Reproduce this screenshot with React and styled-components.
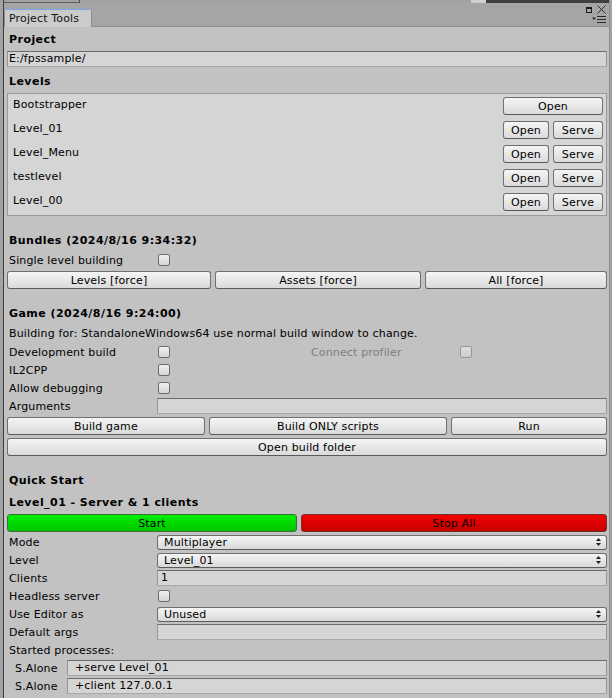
import React from "react";
import styled, { createGlobalStyle, css } from "styled-components";

const GlobalStyle = createGlobalStyle`
  html, body { margin: 0; padding: 0; background: #a3a3a3; }
  body {
    width: 612px; height: 698px; overflow: hidden;
    font-family: "DejaVu Sans", Verdana, sans-serif;
    font-size: 11px; color: #000;
    letter-spacing: 0.15px;
  }
  * { box-sizing: border-box; }
`;

const Window = styled.div`
  width: 612px;
  height: 698px;
  padding-left: 3px;
  background: #a3a3a3;
  overflow: hidden;
`;

const Frame = styled.div`
  width: 607px;
  height: 100%;
  border-left: 1px solid #3c3c3c;
  border-right: 1px solid #8d8d8d;
  display: flex;
  flex-direction: column;
`;

const TopStrip = styled.div`
  height: 3px;
  display: flex;
  flex: none;
`;

const StripSeg = styled.div`
  width: ${(p) => (p.$w ? `${p.$w}px` : "auto")};
  flex: ${(p) => (p.$w ? "none" : "1")};
  background: ${(p) => p.$bg};
  border-bottom: ${(p) => (p.$line ? "1px solid #5e5e5e" : "none")};
  border-right: ${(p) => (p.$edge ? "1px solid #4a4a4a" : "none")};
`;

const TabBar = styled.div`
  height: 24px;
  flex: none;
  background: #a5a5a5;
  display: flex;
  justify-content: space-between;
  align-items: flex-end;
  border-bottom: 1px solid #8f8f8f;
`;

const Tab = styled.div`
  width: 88px;
  height: 18px;
  margin-bottom: -1px;
  background: #cbcbcb;
  border: 1px solid #8f8f8f;
  border-top: 1px solid #79a6e6;
  border-bottom: none;
  padding: 1px 0 0 4px;
  line-height: 16px;
  color: #111;
`;

const IconCluster = styled.div`
  align-self: flex-start;
  margin-top: 2px;
  padding-right: 3px;
  display: flex;
  flex-direction: column;
  align-items: flex-end;
`;

const IconRow = styled.div`
  display: flex;
  align-items: center;
  gap: 5px;
  height: ${(p) => p.$h}px;
  margin-top: ${(p) => p.$mt || 0}px;
`;

const Panel = styled.div`
  flex: 1;
  background: #c2c2c2;
  padding: 3px 2px 0 3px;
  display: flex;
  flex-direction: column;
`;

const textNudge = css`
  height: 18px;
  padding-top: 1px;
  line-height: 18px;
  white-space: nowrap;
`;

const Header = styled.div`
  ${textNudge}
  font-weight: bold;
  letter-spacing: 0.45px;
  padding-left: 2px;
  margin-top: ${(p) => p.$mt || 0}px;
  flex: none;
`;

const Line = styled.div`
  ${textNudge}
  padding-left: 2px;
  margin-top: ${(p) => p.$mt || 0}px;
  flex: none;
`;

const fieldStyle = css`
  height: 16px;
  border: 1px solid #979797;
  border-top-color: #6c6c6c;
  border-bottom-color: #a8a8a8;
  background: #d5d5d5;
  line-height: 14px;
  white-space: nowrap;
  overflow: hidden;
`;

const TextField = styled.div`
  ${fieldStyle}
  padding-left: ${(p) => p.$pad ?? 1}px;
  margin-top: ${(p) => p.$mt || 0}px;
  flex: none;
`;

const LevelBox = styled.div`
  margin-top: ${(p) => p.$mt || 0}px;
  border: 1px solid #9a9a9a;
  background: #d5d5d5;
  padding: 1px 3px 0 5px;
  flex: none;
`;

const LevelRow = styled.div`
  height: 24px;
  display: flex;
  justify-content: space-between;
  align-items: flex-start;
`;

const LevelName = styled.div`
  ${textNudge}
`;

const ButtonGroup = styled.div`
  display: flex;
  gap: 4px;
  margin-top: 2px;
`;

const variants = {
  normal: css`
    background: linear-gradient(#f5f5f5, #dadada);
    border-color: #707070;
    border-bottom-color: #5a5a5a;
  `,
  green: css`
    background: linear-gradient(#00f000, #00c400);
    border-color: #3e6e3e;
  `,
  red: css`
    background: linear-gradient(#f40000, #c60000);
    border-color: #703030;
  `,
};

const Button = styled.button`
  width: ${(p) => p.$w}px;
  height: 18px;
  padding: 2px 0 0;
  border: 1px solid;
  border-radius: 3px;
  font-family: inherit;
  font-size: 11px;
  letter-spacing: 0.15px;
  line-height: 14px;
  color: #000;
  text-align: center;
  white-space: nowrap;
  flex: none;
  ${(p) => variants[p.$variant || "normal"]}
`;

const ButtonRow = styled.div`
  display: flex;
  gap: 4px;
  margin-top: ${(p) => p.$mt || 0}px;
  flex: none;
`;

const FormRow = styled.div`
  height: 18px;
  display: grid;
  grid-template-columns: 150px 1fr;
  align-items: center;
  margin-top: ${(p) => p.$mt || 0}px;
  flex: none;
`;

const SplitRow = styled.div`
  height: 18px;
  display: grid;
  grid-template-columns: 302px 1fr;
  margin-top: ${(p) => p.$mt || 0}px;
  flex: none;
`;

const HalfRow = styled.div`
  display: grid;
  grid-template-columns: 150px 1fr;
  align-items: center;
`;

const Label = styled.div`
  ${textNudge}
  padding-left: 2px;
  color: ${(p) => (p.$disabled ? "#7e7e7e" : "#000")};
`;

const Checkbox = styled.div`
  width: 12px;
  height: 12px;
  margin-left: 1px;
  border: 1px solid ${(p) => (p.$disabled ? "#979797" : "#6c6c6c")};
  border-radius: 2px;
  background: ${(p) =>
    p.$disabled ? "linear-gradient(#dedede, #cdcdcd)" : "linear-gradient(#f0f0f0, #d4d4d4)"};
`;

const RowField = styled.div`
  ${fieldStyle}
  padding-left: 3px;
`;

const Dropdown = styled.div`
  height: 15px;
  border: 1px solid #6f6f6f;
  border-bottom-color: #5c5c5c;
  border-radius: 3px;
  background: linear-gradient(#f5f5f5, #d8d8d8);
  padding: 0 5px 0 6px;
  display: flex;
  justify-content: space-between;
  align-items: center;
  line-height: 13px;
`;

const ProcRow = styled.div`
  height: 18px;
  display: grid;
  grid-template-columns: 60px 1fr;
  align-items: center;
  flex: none;
`;

const ProcLabel = styled.div`
  ${textNudge}
  padding-left: 8px;
`;

const ProcField = styled.div`
  ${fieldStyle}
  padding-left: 7px;
`;

const Arrows = () => (
  <svg width="5" height="8" viewBox="0 0 5 8">
    <polygon points="0,3 2.5,0 5,3" fill="#1e1e1e" />
    <polygon points="0,5 2.5,8 5,5" fill="#1e1e1e" />
  </svg>
);

const MaxIcon = () => (
  <svg width="6" height="6" viewBox="0 0 6 6">
    <rect x="0.5" y="0.5" width="5" height="5" fill="none" stroke="#1a1a1a" />
    <rect x="0" y="0" width="6" height="2" fill="#1a1a1a" />
  </svg>
);

const CloseIcon = () => (
  <svg width="9" height="9" viewBox="0 0 9 9">
    <path d="M0.5 0.5 L8.5 8.5 M8.5 0.5 L0.5 8.5" stroke="#2a2a2a" strokeWidth="1" />
  </svg>
);

const MenuIcon = () => (
  <svg width="14" height="7" viewBox="0 0 14 7">
    <polygon points="0,1.5 4,1.5 2,4" fill="#2a2a2a" />
    <rect x="5" y="0" width="9" height="1" fill="#2a2a2a" />
    <rect x="5" y="3" width="9" height="1" fill="#2a2a2a" />
    <rect x="5" y="6" width="9" height="1" fill="#2a2a2a" />
  </svg>
);

const levels = [
  { name: "Bootstrapper", serve: false },
  { name: "Level_01", serve: true },
  { name: "Level_Menu", serve: true },
  { name: "testlevel", serve: true },
  { name: "Level_00", serve: true },
];

export default function App() {
  return (
    <>
      <GlobalStyle />
      <Window>
        <Frame>
          <TopStrip>
            <StripSeg $w={76} $bg="#a3a3a3" $line $edge />
            <StripSeg $w={391} $bg="#a3a3a3" />
            <StripSeg $w={15} $bg="#cfcfcf" />
            <StripSeg $bg="#3f3f3f" />
          </TopStrip>
          <TabBar>
            <Tab>Project Tools</Tab>
            <IconCluster>
              <IconRow $h={9}>
                <MaxIcon />
                <CloseIcon />
              </IconRow>
              <IconRow $h={7} $mt={2}>
                <MenuIcon />
              </IconRow>
            </IconCluster>
          </TabBar>
          <Panel>
            <Header>Project</Header>
            <TextField $mt={3}>E:/fpssample/</TextField>

            <Header $mt={5}>Levels</Header>
            <LevelBox $mt={3}>
              {levels.map((l) => (
                <LevelRow key={l.name}>
                  <LevelName>{l.name}</LevelName>
                  <ButtonGroup>
                    {l.serve ? (
                      <>
                        <Button $w={46}>Open</Button>
                        <Button $w={50}>Serve</Button>
                      </>
                    ) : (
                      <Button $w={100}>Open</Button>
                    )}
                  </ButtonGroup>
                </LevelRow>
              ))}
            </LevelBox>

            <Header $mt={15}>Bundles (2024/8/16 9:34:32)</Header>
            <FormRow $mt={2}>
              <Label>Single level building</Label>
              <Checkbox />
            </FormRow>
            <ButtonRow $mt={2}>
              <Button $w={204}>Levels [force]</Button>
              <Button $w={206}>Assets [force]</Button>
              <Button $w={182}>All [force]</Button>
            </ButtonRow>

            <Header $mt={15}>Game (2024/8/16 9:24:00)</Header>
            <Line $mt={2}>Building for: StandaloneWindows64 use normal build window to change.</Line>
            <SplitRow $mt={1}>
              <HalfRow>
                <Label>Development build</Label>
                <Checkbox />
              </HalfRow>
              <HalfRow>
                <Label $disabled>Connect profiler</Label>
                <Checkbox $disabled />
              </HalfRow>
            </SplitRow>
            <FormRow>
              <Label>IL2CPP</Label>
              <Checkbox />
            </FormRow>
            <FormRow>
              <Label>Allow debugging</Label>
              <Checkbox />
            </FormRow>
            <FormRow>
              <Label>Arguments</Label>
              <RowField />
            </FormRow>
            <ButtonRow $mt={2}>
              <Button $w={198}>Build game</Button>
              <Button $w={238}>Build ONLY scripts</Button>
              <Button $w={156}>Run</Button>
            </ButtonRow>
            <ButtonRow $mt={3}>
              <Button $w={600}>Open build folder</Button>
            </ButtonRow>

            <Header $mt={15}>Quick Start</Header>
            <Header $mt={4}>Level_01 - Server &amp; 1 clients</Header>
            <ButtonRow $mt={3}>
              <Button $w={290} $variant="green">Start</Button>
              <Button $w={306} $variant="red">Stop All</Button>
            </ButtonRow>
            <FormRow $mt={1}>
              <Label>Mode</Label>
              <Dropdown>
                <span>Multiplayer</span>
                <Arrows />
              </Dropdown>
            </FormRow>
            <FormRow>
              <Label>Level</Label>
              <Dropdown>
                <span>Level_01</span>
                <Arrows />
              </Dropdown>
            </FormRow>
            <FormRow>
              <Label>Clients</Label>
              <RowField>1</RowField>
            </FormRow>
            <FormRow>
              <Label>Headless server</Label>
              <Checkbox />
            </FormRow>
            <FormRow>
              <Label>Use Editor as</Label>
              <Dropdown>
                <span>Unused</span>
                <Arrows />
              </Dropdown>
            </FormRow>
            <FormRow>
              <Label>Default args</Label>
              <RowField />
            </FormRow>
            <Line>Started processes:</Line>
            <ProcRow>
              <ProcLabel>S.Alone</ProcLabel>
              <ProcField>+serve Level_01</ProcField>
            </ProcRow>
            <ProcRow>
              <ProcLabel>S.Alone</ProcLabel>
              <ProcField>+client 127.0.0.1</ProcField>
            </ProcRow>
          </Panel>
        </Frame>
      </Window>
    </>
  );
}
